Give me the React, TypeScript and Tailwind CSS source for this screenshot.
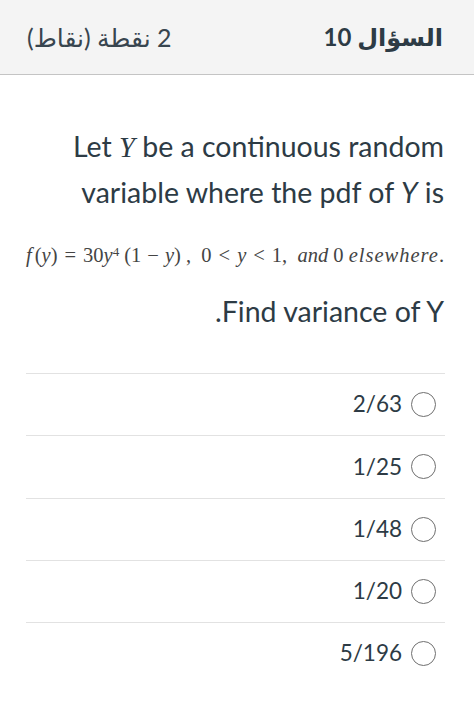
import React from "react"

const options = ["2/63", "1/25", "1/48", "1/20", "5/196"]

function Rel({ children }: { children: React.ReactNode }) {
  return <span className="mx-[7px]">{children}</span>
}

export default function App() {
  return (
    <div className="min-h-screen w-[474px] bg-white font-['Lato','DejaVu_Sans',sans-serif] text-[#2d3b45]">
      {/* question header */}
      <div
        dir="rtl"
        className="flex h-[75px] items-center justify-between border-b border-[#c4c4c4] bg-[#f4f4f4] pl-[27px] pr-[31px]"
      >
        <span className="text-[24px] font-bold leading-none">السؤال 10</span>
        <span className="text-[25px] leading-none text-[#38454f]">2 نقطة (نقاط)</span>
      </div>

      <div className="pl-[26px] pr-[30px] pt-[49px]">
        <p className="text-right text-[28.5px] leading-[44px]">
          Let <i className="font-['Liberation_Serif',serif]">Y</i> be a continuous random
          <br />
          variable where the pdf of <i>Y</i> is
        </p>

        <p className="mt-[29px] whitespace-nowrap text-right font-['Liberation_Serif',serif] text-[20.5px] leading-[24px] text-[#444]">
          <i className="pr-[3px]">f</i>(<i>y</i>)<Rel>=</Rel>30<i>y</i>
          <sup className="text-[13px]">4</sup> (1<span className="mx-[6px]">−</span>
          <i>y</i>) , &nbsp;0<Rel>&lt;</Rel>
          <i>y</i>
          <Rel>&lt;</Rel>1, &nbsp;<i>and</i> 0 <i className="tracking-[1px]">elsewhere</i>.
        </p>

        <p className="mt-[22px] text-right text-[28.5px] leading-[44px]">.Find variance of Y</p>

        <div className="mt-[40px] -mr-[1px]">
          {options.map((opt) => (
            <div
              key={opt}
              className="flex h-[62.25px] items-center justify-end gap-[9px] border-t border-[#e2e2e2] pr-[9px]"
            >
              <span className="text-[22.5px] leading-none">{opt}</span>
              <span className="h-[25px] w-[25px] rounded-full border-[1.5px] border-[#6f6f6f] bg-white" />
            </div>
          ))}
        </div>
      </div>
    </div>
  )
}
